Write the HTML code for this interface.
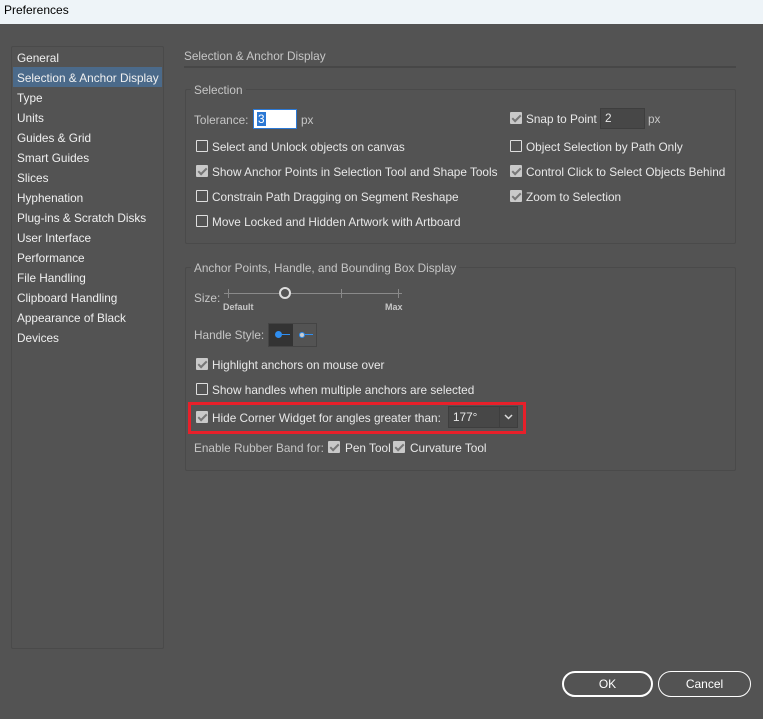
<!DOCTYPE html>
<html><head><style>
*{margin:0;padding:0;box-sizing:border-box}
body{width:763px;height:719px;background:#535353;font-family:"Liberation Sans",sans-serif;font-size:11.8px;color:#e8e8e8;position:relative;overflow:hidden}
.a{position:absolute;white-space:nowrap}
.title{left:0;top:0;width:763px;height:24px;background:#eef4f8;color:#000;font-size:12px;padding:3px 0 0 4px}
.side{left:11px;top:46px;width:153px;height:603px;border:1px solid #4a4a4a;border-radius:2px}
.it{left:17px;color:#f0f0f0}
.sel{left:13px;top:67px;width:149px;height:20px;background:#4b6a8a}
.g{color:#c6c6c6}
.box{border:1px solid #4a4a4a;border-radius:2px}
.cb{position:absolute;width:12px;height:12px;border:1px solid #dedede;border-radius:1px}
.cb.on{background:#c9c9c9;border-color:#c9c9c9}
.cb.on::after{content:"";position:absolute;left:3px;top:0px;width:3px;height:7px;border:solid #777;border-width:0 2px 2px 0;transform:rotate(45deg)}
.btn{position:absolute;height:26px;border:2px solid #fff;border-radius:13px;text-align:center;line-height:22px;color:#fff;font-size:12px}
</style></head><body>
<div class="a title">Preferences</div>
<div class="a side"></div>
<div class="a sel"></div>
<div class="a it" style="top:51px">General</div>
<div class="a it" style="top:71px">Selection &amp; Anchor Display</div>
<div class="a it" style="top:91px">Type</div>
<div class="a it" style="top:111px">Units</div>
<div class="a it" style="top:131px">Guides &amp; Grid</div>
<div class="a it" style="top:151px">Smart Guides</div>
<div class="a it" style="top:171px">Slices</div>
<div class="a it" style="top:191px">Hyphenation</div>
<div class="a it" style="top:211px">Plug-ins &amp; Scratch Disks</div>
<div class="a it" style="top:231px">User Interface</div>
<div class="a it" style="top:251px">Performance</div>
<div class="a it" style="top:271px">File Handling</div>
<div class="a it" style="top:291px">Clipboard Handling</div>
<div class="a it" style="top:311px">Appearance of Black</div>
<div class="a it" style="top:331px">Devices</div>

<div class="a g" style="left:184px;top:49px">Selection &amp; Anchor Display</div>
<div class="a" style="left:184px;top:66px;width:552px;height:2px;background:#474747"></div>

<div class="a box" style="left:185px;top:89px;width:551px;height:155px"></div>
<div class="a g" style="left:191px;top:83px;background:#535353;padding:0 3px">Selection</div>
<div class="a g" style="left:194px;top:113px">Tolerance:</div>
<div class="a" style="left:253px;top:109px;width:44px;height:20px;background:#fff;border:1px solid #2b78d4"><span style="position:absolute;left:3px;top:2px;background:#2b78d4;color:#fff;padding:0 1px">3</span></div>
<div class="a g" style="left:301px;top:113px">px</div>
<div class="cb" style="left:196px;top:140px"></div><div class="a" style="left:212px;top:140px">Select and Unlock objects on canvas</div>
<div class="cb on" style="left:196px;top:165px"></div><div class="a" style="left:212px;top:165px">Show Anchor Points in Selection Tool and Shape Tools</div>
<div class="cb" style="left:196px;top:190px"></div><div class="a" style="left:212px;top:190px">Constrain Path Dragging on Segment Reshape</div>
<div class="cb" style="left:196px;top:215px"></div><div class="a" style="left:212px;top:215px">Move Locked and Hidden Artwork with Artboard</div>

<div class="cb on" style="left:510px;top:112px"></div><div class="a" style="left:526px;top:112px">Snap to Point</div>
<div class="a" style="left:600px;top:108px;width:45px;height:21px;background:#474747;border:1px solid #3e3e3e;padding:2px 4px">2</div>
<div class="a g" style="left:648px;top:112px">px</div>
<div class="cb" style="left:510px;top:140px"></div><div class="a" style="left:526px;top:140px">Object Selection by Path Only</div>
<div class="cb on" style="left:510px;top:165px"></div><div class="a" style="left:526px;top:165px">Control Click to Select Objects Behind</div>
<div class="cb on" style="left:510px;top:190px"></div><div class="a" style="left:526px;top:190px">Zoom to Selection</div>

<div class="a box" style="left:185px;top:267px;width:551px;height:204px"></div>
<div class="a g" style="left:191px;top:261px;background:#535353;padding:0 3px">Anchor Points, Handle, and Bounding Box Display</div>
<div class="a g" style="left:194px;top:291px">Size:</div>
<div class="a" style="left:224px;top:293px;width:178px;height:1px;background:#8a8a8a"></div>
<div class="a" style="left:228px;top:289px;width:1px;height:9px;background:#8a8a8a"></div>
<div class="a" style="left:341px;top:289px;width:1px;height:9px;background:#8a8a8a"></div>
<div class="a" style="left:398px;top:289px;width:1px;height:9px;background:#8a8a8a"></div>
<div class="a" style="left:279px;top:287px;width:12px;height:12px;border:2px solid #ddd;border-radius:50%;background:#535353"></div>
<div class="a g" style="left:223px;top:302px;font-size:9px;font-weight:bold">Default</div>
<div class="a g" style="left:385px;top:302px;font-size:9px;font-weight:bold">Max</div>
<div class="a g" style="left:194px;top:328px">Handle Style:</div>
<div class="a" style="left:268px;top:323px;width:49px;height:24px;border:1px solid #444"></div>
<div class="a" style="left:269px;top:324px;width:24px;height:22px;background:#333"></div>
<div class="a" style="left:275px;top:331px;width:7px;height:7px;border-radius:50%;background:#2f8ef0"></div>
<div class="a" style="left:282px;top:334px;width:8px;height:1px;background:#2f8ef0"></div>
<div class="a" style="left:299px;top:332px;width:6px;height:6px;border-radius:50%;background:#ccc;border:1px solid #2f8ef0"></div>
<div class="a" style="left:305px;top:334px;width:8px;height:1px;background:#2f8ef0"></div>
<div class="cb on" style="left:196px;top:358px"></div><div class="a" style="left:212px;top:358px">Highlight anchors on mouse over</div>
<div class="cb" style="left:196px;top:383px"></div><div class="a" style="left:212px;top:383px">Show handles when multiple anchors are selected</div>
<div class="a" style="left:188px;top:402px;width:338px;height:32px;border:3px solid #e8202a"></div>
<div class="cb on" style="left:196px;top:411px"></div><div class="a" style="left:212px;top:411px">Hide Corner Widget for angles greater than:</div>
<div class="a" style="left:448px;top:406px;width:70px;height:22px;background:#474747;border:1px solid #3e3e3e"><span style="position:absolute;left:4px;top:3px">177°</span><span style="position:absolute;left:50px;top:0;width:1px;height:20px;background:#3e3e3e"></span><svg style="position:absolute;left:55px;top:7px" width="9" height="6"><path d="M1 1L4.5 4.5L8 1" stroke="#ddd" stroke-width="1.5" fill="none"/></svg></div>
<div class="a g" style="left:194px;top:441px">Enable Rubber Band for:</div>
<div class="cb on" style="left:328px;top:441px"></div><div class="a" style="left:345px;top:441px">Pen Tool</div>
<div class="cb on" style="left:393px;top:441px"></div><div class="a" style="left:410px;top:441px">Curvature Tool</div>

<div class="btn" style="left:562px;top:671px;width:91px">OK</div>
<div class="btn" style="left:658px;top:671px;width:93px;border-width:1px;line-height:24px">Cancel</div>
</body></html>
